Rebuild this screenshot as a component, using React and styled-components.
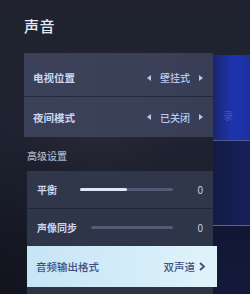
import React from 'react';
import styled, { createGlobalStyle } from 'styled-components';

const GlobalStyle = createGlobalStyle`
  html, body {
    margin: 0;
    padding: 0;
    background: #1c1f2d;
  }
  * {
    box-sizing: border-box;
  }
`;

const Screen = styled.div`
  width: 250px;
  height: 294px;
  overflow: hidden;
  display: flex;
  font-family: "Noto Sans CJK SC", "Noto Sans", sans-serif;
  background:
    radial-gradient(ellipse 90px 70px at 100px 110px, rgba(70, 60, 70, 0.35), transparent),
    radial-gradient(ellipse 120px 160px at 0px 294px, rgba(10, 12, 20, 0.6), transparent),
    linear-gradient(180deg, #20232f 0%, #1e2130 60%, #1b1e2b 100%);
`;

const Main = styled.div`
  width: 213px;
  flex-shrink: 0;
  padding-left: 24px;
  padding-top: 16px;
  display: flex;
  flex-direction: column;
`;

const Title = styled.h1`
  margin: 0;
  font-size: 15px;
  line-height: 20px;
  font-weight: 500;
  color: #e4e9f6;
  padding-left: 0;
  letter-spacing: 0.5px;
`;

const Panel = styled.div`
  margin-top: ${p => p.$top}px;
  margin-left: ${p => p.$indent || 0}px;
  background: ${p => p.$bg};
  padding-top: ${p => p.$padTop || 0}px;
  display: flex;
  flex-direction: column;
`;

const Row = styled.div`
  height: ${p => p.$h}px;
  display: flex;
  align-items: center;
  padding: 0 ${p => p.$padR}px 0 ${p => p.$padL}px;
  border-bottom: ${p => (p.$line ? '1px solid rgba(20, 24, 36, 0.55)' : 'none')};
  color: #cbd5ef;
  font-size: ${p => p.$fs || 10.5}px;
  font-weight: 700;
`;

const Label = styled.span`
  white-space: nowrap;
`;

const Picker = styled.div`
  margin-left: auto;
  display: flex;
  align-items: center;
  gap: 9px;
  font-size: 10px;
  font-weight: 500;
  color: #bdcaf0;
`;

const Arrow = styled.span`
  width: 0;
  height: 0;
  border-top: 3.5px solid transparent;
  border-bottom: 3.5px solid transparent;
  ${p => (p.$dir === 'left'
    ? 'border-right: 4px solid #b9c7ee;'
    : 'border-left: 4px solid #b9c7ee;')}
`;

const SectionLabel = styled.div`
  margin-top: 12px;
  margin-left: 3px;
  font-size: 10px;
  line-height: 14px;
  color: #a9b2c8;
  font-weight: 500;
`;

const Track = styled.div`
  margin-left: auto;
  width: ${p => p.$w}px;
  height: 3px;
  border-radius: 2px;
  background: #535c75;
  display: flex;
`;

const Fill = styled.div`
  height: 100%;
  border-radius: 2px;
  background: #dbe6f7;
`;

const Value = styled.span`
  width: 30px;
  text-align: right;
  font-size: 10px;
  font-weight: 400;
  color: #c3cde8;
`;

const Focused = styled.div`
  height: 41px;
  margin-right: -4px;
  position: relative;
  z-index: 1;
  display: flex;
  align-items: center;
  padding: 0 11px 0 9px;
  background: linear-gradient(90deg, #c7e4f6 0%, #d2ecf8 50%, #e0f3fb 100%);
  color: #3d4f80;
  font-size: 10.5px;
  font-weight: 500;
`;

const FocusValue = styled.span`
  margin-left: auto;
  display: flex;
  align-items: center;
  gap: 3px;
  font-weight: 500;
`;

const Side = styled.div`
  flex: 1;
  padding-top: 55px;
  display: flex;
  flex-direction: column;
`;

const BlueBlock = styled.div`
  height: 85px;
  background: linear-gradient(90deg, #1a2670 0%, #1d34b0 55%, #1b2f9e 100%);
  display: flex;
  align-items: center;
  padding-left: 10px;
  padding-top: 36px;
  color: rgba(120, 130, 190, 0.45);
  font-size: 10px;
  font-family: "Noto Sans CJK SC", sans-serif;
`;

const DarkBlock = styled.div`
  height: 86px;
  border-top: 1px solid #4c5b93;
  border-bottom: 1px solid #56649a;
  background: linear-gradient(90deg, #141b45 0%, #16205a 100%);
`;

const BottomBlock = styled.div`
  flex: 1;
  background: linear-gradient(180deg, #121634 0%, #161a3a 100%);
`;

export default function App() {
  return (
    <>
      <GlobalStyle />
      <Screen>
        <Main>
          <Title>声音</Title>
          <Panel $top={17} $bg="linear-gradient(90deg, #3a4159 0%, #394058 70%, #363d55 100%)" $padTop={6}>
            <Row $h={38} $padL={9} $padR={10} $line>
              <Label>电视位置</Label>
              <Picker>
                <Arrow $dir="left" />
                <span>壁挂式</span>
                <Arrow $dir="right" />
              </Picker>
            </Row>
            <Row $h={40} $padL={9} $padR={10}>
              <Label>夜间模式</Label>
              <Picker>
                <Arrow $dir="left" />
                <span>已关闭</span>
                <Arrow $dir="right" />
              </Picker>
            </Row>
          </Panel>
          <SectionLabel>高级设置</SectionLabel>
          <Panel $top={8} $indent={3} $bg="linear-gradient(180deg, #31374b 0%, #2e3446 100%)" style={{ flex: 1 }}>
            <Row $h={38} $padL={10} $padR={10} $line $fs={10}>
              <Label>平衡</Label>
              <Track $w={93}>
                <Fill style={{ width: '50%' }} />
              </Track>
              <Value>0</Value>
            </Row>
            <Row $h={37} $padL={10} $padR={10} $fs={10}>
              <Label>声像同步</Label>
              <Track $w={82} />
              <Value>0</Value>
            </Row>
            <Focused>
              <Label>音频输出格式</Label>
              <FocusValue>
                双声道
                <svg width="8" height="9" viewBox="0 0 8 9">
                  <path d="M2 1 L6 4.5 L2 8" fill="none" stroke="#3d4f80" strokeWidth="1.8" />
                </svg>
              </FocusValue>
            </Focused>
          </Panel>
        </Main>
        <Side>
          <BlueBlock>录</BlueBlock>
          <DarkBlock />
          <BottomBlock />
        </Side>
      </Screen>
    </>
  );
}
